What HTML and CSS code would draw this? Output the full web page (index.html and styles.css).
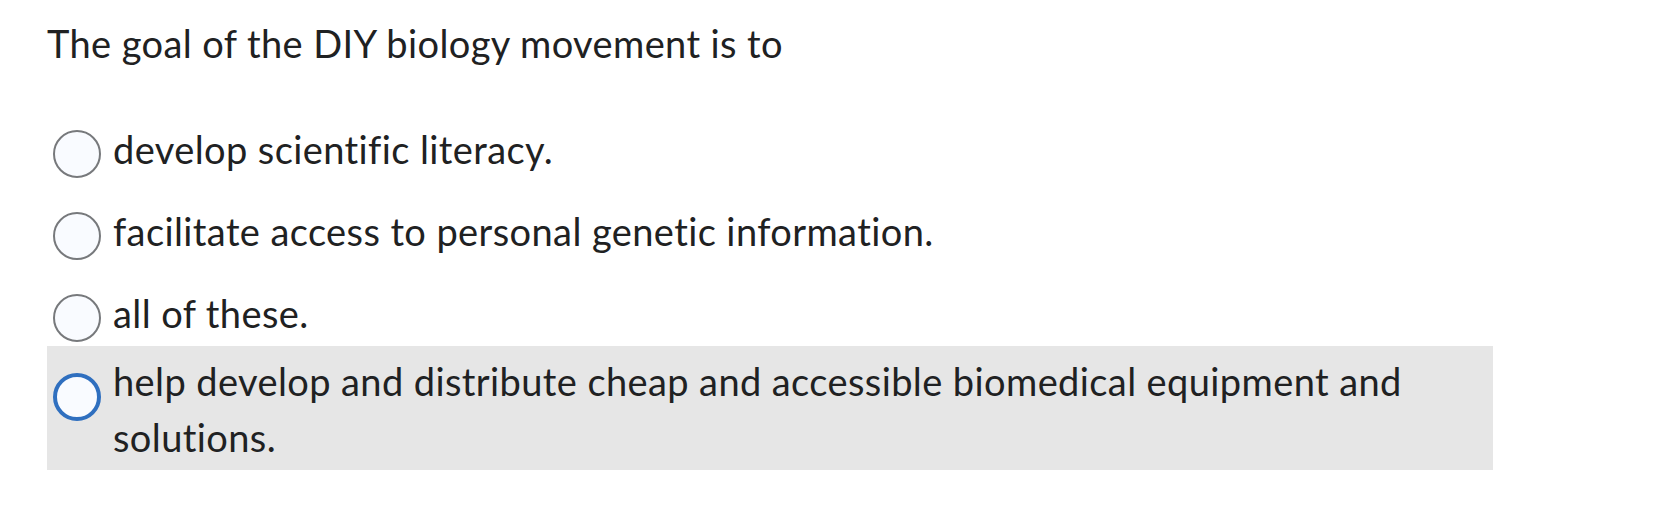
FILE: index.html
```html
<!DOCTYPE html>
<html lang="en">
<head>
<meta charset="utf-8">
<title>Question</title>
<link rel="stylesheet" href="styles.css">
</head>
<body>
<div class="question">
  <p class="prompt">The goal of the DIY biology movement is to</p>
  <div class="choices" role="radiogroup">
    <label class="choice">
      <span class="radio"></span>
      <span class="choice-text">develop scientific literacy.</span>
    </label>
    <label class="choice">
      <span class="radio"></span>
      <span class="choice-text">facilitate access to personal genetic information.</span>
    </label>
    <label class="choice">
      <span class="radio"></span>
      <span class="choice-text">all of these.</span>
    </label>
    <label class="choice is-hover">
      <span class="radio"></span>
      <span class="choice-text">help develop and distribute cheap and accessible biomedical equipment and solutions.</span>
    </label>
  </div>
</div>
</body>
</html>
```
FILE: styles.css
```css
html, body {
  margin: 0;
  padding: 0;
  background: #ffffff;
}

body {
  font-family: Lato, "Open Sans", sans-serif;
  color: #202122;
  font-size: 38px;
  line-height: 56px;
  letter-spacing: 0.4px;
  font-variant-ligatures: none;
  font-feature-settings: "liga" 0;
}

.question {
  padding: 15px 0 0 47px;
}

.prompt {
  margin: 0;
}

.choices {
  display: flex;
  flex-direction: column;
  margin-top: 45px;
  width: 1446px;
}

.choice {
  display: flex;
  align-items: flex-start;
  gap: 12px;
  padding: 5px 6px 7px;
}

.choice + .choice {
  margin-top: 13px;
}

.choice.is-hover {
  margin-top: -3px;
  padding: 7px 6px 5px;
  background: #e6e6e6;
}

.radio {
  flex: none;
  box-sizing: border-box;
  width: 48px;
  height: 48px;
  margin-top: 9px;
  border: 2px solid #77797c;
  border-radius: 50%;
  background: #f9fbff;
}

.is-hover .radio {
  margin-top: 20px;
  border: 4px solid #2f6fbf;
}

.choice-text {
  flex: 1;
}
```
